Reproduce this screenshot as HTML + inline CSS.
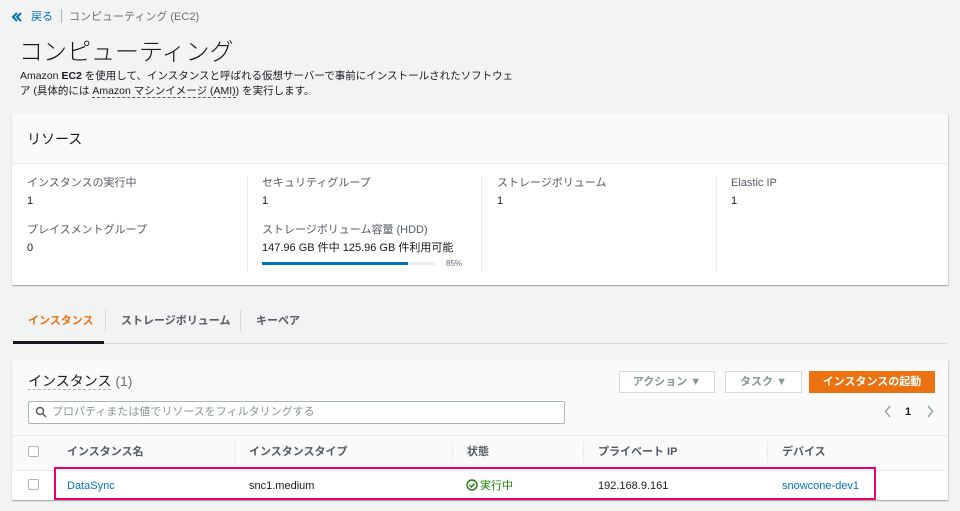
<!DOCTYPE html>
<html><head><meta charset="utf-8">
<style>
*{box-sizing:border-box;margin:0;padding:0}
body{width:960px;height:511px;overflow:hidden;background:#f2f3f3;font-family:"Liberation Sans","Noto Sans CJK JP",sans-serif;color:#16191f;position:relative;font-size:11px}
.a{position:absolute;white-space:nowrap;line-height:14px}
.link{color:#0073bb}
.lbl{color:#545b64;font-size:11px}
.card{position:absolute;background:#fff;box-shadow:0 1px 1px rgba(0,28,36,.3),1px 1px 1px rgba(0,28,36,.1)}
.btn{position:absolute;height:22px;border:1px solid #d5dbdb;background:#fff;color:#879596;font-size:11px;font-weight:bold;text-align:center;line-height:20px}
.sep{position:absolute;width:1px;background:#eaeded}
</style></head><body>
<svg class="a" style="left:11px;top:11px" width="12" height="12" viewBox="0 0 12 12"><path d="M6 2L2 6l4 4M10 2L6 6l4 4" stroke="#0073bb" stroke-width="2" fill="none"/></svg>
<div class="a link" style="left:31px;top:10px">戻る</div>
<div class="a" style="left:61px;top:9px;width:1px;height:14px;background:#aab7b8"></div>
<div class="a" style="left:69px;top:10px;color:#687078">コンピューティング (EC2)</div>
<div class="a" style="left:19px;top:39px;font-size:24px;line-height:28px;font-weight:300">コンピューティング</div>
<div class="a" style="left:20px;top:69px;font-size:10.5px">Amazon <b>EC2</b> を使用して、インスタンスと呼ばれる仮想サーバーで事前にインストールされたソフトウェ</div>
<div class="a" style="left:20px;top:84px;font-size:10.5px">ア (具体的には <span style="border-bottom:1px dashed #545b64">Amazon マシンイメージ (AMI)</span>) を実行します。</div>

<div class="card" style="left:12px;top:114px;width:936px;height:171px">
 <div style="height:50px;background:#fafafa;border-bottom:1px solid #eaeded"></div>
</div>
<div class="a" style="left:27px;top:131px;font-size:14px;line-height:16px">リソース</div>
<div class="sep" style="left:247px;top:176px;height:96px"></div>
<div class="sep" style="left:481px;top:176px;height:96px"></div>
<div class="sep" style="left:716px;top:176px;height:96px"></div>
<div class="a lbl" style="left:27px;top:176px">インスタンスの実行中</div>
<div class="a" style="left:27px;top:194px">1</div>
<div class="a lbl" style="left:27px;top:223px">プレイスメントグループ</div>
<div class="a" style="left:27px;top:241px">0</div>
<div class="a lbl" style="left:262px;top:176px">セキュリティグループ</div>
<div class="a" style="left:262px;top:194px">1</div>
<div class="a lbl" style="left:262px;top:223px">ストレージボリューム容量 (HDD)</div>
<div class="a" style="left:262px;top:241px">147.96 GB 件中 125.96 GB 件利用可能</div>
<div class="a" style="left:262px;top:262px;width:173px;height:3px;background:#eaeded"><div style="width:146px;height:3px;background:#0073bb"></div></div>
<div class="a" style="left:446px;top:257px;font-size:8px;color:#687078">85%</div>
<div class="a lbl" style="left:497px;top:176px">ストレージボリューム</div>
<div class="a" style="left:497px;top:194px">1</div>
<div class="a lbl" style="left:731px;top:176px">Elastic IP</div>
<div class="a" style="left:731px;top:194px">1</div>

<div class="a" style="left:28px;top:314px;font-weight:bold;color:#ec7211">インスタンス</div>
<div class="a" style="left:105px;top:310px;width:1px;height:22px;background:#d5dbdb"></div>
<div class="a" style="left:121px;top:314px;font-weight:bold;color:#545b64">ストレージボリューム</div>
<div class="a" style="left:240px;top:310px;width:1px;height:22px;background:#d5dbdb"></div>
<div class="a" style="left:256px;top:314px;font-weight:bold;color:#545b64">キーペア</div>
<div class="a" style="left:13px;top:343px;width:934px;height:1px;background:#d5dbdb"></div>
<div class="a" style="left:13px;top:341px;width:91px;height:3px;background:#16191f"></div>

<div class="card" style="left:12px;top:360px;width:936px;height:140px;background:#fafafa">
 <div style="position:absolute;top:110px;left:0;right:0;height:30px;background:#fff;border-top:1px solid #eaeded"></div>
 <div style="position:absolute;top:75px;left:0;right:0;height:1px;background:#eaeded"></div>
</div>
<div class="a" style="left:28px;top:373px;font-size:14px;line-height:16px;color:#16191f"><span style="border-bottom:1px dashed #aab7b8">インスタンス</span> <span style="color:#687078">(1)</span></div>
<div class="btn" style="left:619px;top:371px;width:96px">アクション ▼</div>
<div class="btn" style="left:725px;top:371px;width:77px">タスク ▼</div>
<div class="btn" style="left:809px;top:371px;width:126px;background:#ec7211;border-color:#ec7211;color:#fff">インスタンスの起動</div>
<div class="a" style="left:28px;top:401px;width:537px;height:23px;border:1px solid #aab7b8;background:#fff;border-radius:2px"></div>
<svg class="a" style="left:35px;top:406px" width="12" height="12" viewBox="0 0 12 12"><circle cx="5" cy="5" r="3.5" stroke="#545b64" stroke-width="1.5" fill="none"/><path d="M7.5 7.5L11 11" stroke="#545b64" stroke-width="1.5"/></svg>
<div class="a" style="left:52px;top:405px;color:#879596">プロパティまたは値でリソースをフィルタリングする</div>
<svg class="a" style="left:884px;top:405px" width="8" height="13" viewBox="0 0 8 13"><path d="M6 1L1.5 6.5 6 12" stroke="#879596" stroke-width="1.3" fill="none"/></svg>
<div class="a" style="left:905px;top:405px;font-weight:bold">1</div>
<svg class="a" style="left:926px;top:405px" width="8" height="13" viewBox="0 0 8 13"><path d="M2 1l4.5 5.5L2 12" stroke="#879596" stroke-width="1.3" fill="none"/></svg>

<div class="a" style="left:28px;top:446px;width:11px;height:11px;border:1px solid #aab7b8;background:#fff;border-radius:2px"></div>
<div class="a" style="left:67px;top:445px;font-weight:bold;color:#545b64">インスタンス名</div>
<div class="sep" style="left:234px;top:441px;height:22px"></div>
<div class="a" style="left:249px;top:445px;font-weight:bold;color:#545b64">インスタンスタイプ</div>
<div class="sep" style="left:452px;top:441px;height:22px"></div>
<div class="a" style="left:467px;top:445px;font-weight:bold;color:#545b64">状態</div>
<div class="sep" style="left:583px;top:441px;height:22px"></div>
<div class="a" style="left:598px;top:445px;font-weight:bold;color:#545b64">プライベート IP</div>
<div class="sep" style="left:767px;top:441px;height:22px"></div>
<div class="a" style="left:782px;top:445px;font-weight:bold;color:#545b64">デバイス</div>

<div class="a" style="left:28px;top:479px;width:11px;height:11px;border:1px solid #aab7b8;background:#fff;border-radius:2px"></div>
<div class="a link" style="left:67px;top:479px">DataSync</div>
<div class="a" style="left:249px;top:479px">snc1.medium</div>
<svg class="a" style="left:466px;top:479px" width="12" height="12" viewBox="0 0 12 12"><circle cx="6" cy="6" r="5" stroke="#1d8102" stroke-width="1.4" fill="none"/><path d="M3.5 6l2 2 3-3.5" stroke="#1d8102" stroke-width="1.4" fill="none"/></svg>
<div class="a" style="left:480px;top:479px;color:#1d8102">実行中</div>
<div class="a" style="left:598px;top:479px">192.168.9.161</div>
<div class="a link" style="left:782px;top:479px">snowcone-dev1</div>
<div class="a" style="left:54px;top:467px;width:822px;height:33px;border:2px solid #e8006f"></div>
</body></html>
